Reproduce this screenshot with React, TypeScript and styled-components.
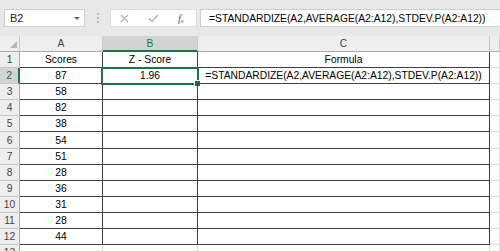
import React from "react";
import styled, { createGlobalStyle } from "styled-components";

const GlobalStyle = createGlobalStyle`
    body {
        margin      : 0;
        overflow    : hidden;
        background  : #ffffff;
        font-family : "Liberation Sans", Arial, sans-serif;
    }
`;

const GREEN = "#217346";
const FORMULA = "=STANDARDIZE(A2,AVERAGE(A2:A12),STDEV.P(A2:A12))";

const Window = styled.div`
    width    : 500px;
    height   : 251px;
    overflow : hidden;
`;

const Toolbar = styled.div`
    height      : 36px;
    background  : #e8e8e8;
    display     : flex;
    align-items : flex-start;
    padding     : 9px 0 0 4px;
    box-sizing  : border-box;
`;

const NameBox = styled.div`
    width           : 81px;
    height          : 18px;
    box-sizing      : border-box;
    background      : #ffffff;
    border          : 1px solid #cfcfcf;
    display         : flex;
    align-items     : center;
    justify-content : space-between;
    padding         : 0 4px 0 5px;
    font-size       : 11px;
    color           : #222;
`;

const Caret = styled.span`
    width        : 0;
    height       : 0;
    border-left  : 3px solid transparent;
    border-right : 3px solid transparent;
    border-top   : 3px solid #666;
`;

const Grip = styled.div`
    width          : 25px;
    height         : 18px;
    display        : flex;
    flex-direction : column;
    align-items    : center;
    justify-content: center;
    gap            : 2px;

    span {
        width         : 2px;
        height        : 2px;
        background    : #a8a8a8;
        border-radius : 1px;
    }
`;

const FxBox = styled.div`
    width       : 87px;
    height      : 18px;
    box-sizing  : border-box;
    background  : #ffffff;
    border      : 1px solid #dcdcdc;
    display     : flex;
    align-items : center;
    padding     : 0 0 0 9px;
    gap         : 19px;
    margin-right: 3px;
`;

const FxLabel = styled.span`
    font-family : "Liberation Serif", serif;
    font-style  : italic;
    font-size   : 11px;
    color       : #555;
    letter-spacing : -0.5px;

    sub {
        font-size      : 7px;
        vertical-align : -1px;
    }
`;

const FormulaInput = styled.div`
    flex        : 1;
    height      : 18px;
    box-sizing  : border-box;
    background  : #ffffff;
    border      : 1px solid #cfcfcf;
    border-right: none;
    display     : flex;
    align-items : center;
    padding-left: 8px;
    font-size   : 10.3px;
    color       : #000;
    white-space : nowrap;
`;

const Sheet = styled.div`
    display               : grid;
    grid-template-columns : 20px 83px 95px 292px 1fr;
    grid-template-rows    : 16px;
    grid-auto-rows        : 16.1px;
`;

const Corner = styled.div`
    background    : #eeeeee;
    border-right  : 1px solid #c8c8c8;
    border-bottom : 1px solid #ababab;
    box-sizing    : border-box;
    display       : flex;
    align-items   : flex-end;
    justify-content: flex-end;
    padding       : 0 2px 3px 0;
`;

const ColHead = styled.div<{ $active?: boolean }>`
    background      : ${p => (p.$active ? "#d3d3d3" : "#eeeeee")};
    color           : ${p => (p.$active ? GREEN : "#444")};
    border-right    : 1px solid #c8c8c8;
    border-bottom   : ${p => (p.$active ? `2px solid ${GREEN}` : "1px solid #ababab")};
    box-sizing      : border-box;
    display         : flex;
    align-items     : center;
    justify-content : center;
    font-size       : 10.3px;
`;

const RowHead = styled.div<{ $active?: boolean }>`
    background      : ${p => (p.$active ? "#d3d3d3" : "#eeeeee")};
    color           : ${p => (p.$active ? GREEN : "#444")};
    border-right    : ${p => (p.$active ? `2px solid ${GREEN}` : "1px solid #ababab")};
    border-bottom   : 1px solid #c8c8c8;
    box-sizing      : border-box;
    display         : flex;
    align-items     : center;
    justify-content : center;
    font-size       : 10.3px;
`;

const Cell = styled.div<{ $boxed?: boolean; $selected?: boolean }>`
    position        : relative;
    border-right    : 1px solid ${p => (p.$boxed ? "#404040" : "#dadada")};
    border-bottom   : 1px solid ${p => (p.$boxed ? "#404040" : "#dadada")};
    box-sizing      : border-box;
    display         : flex;
    align-items     : center;
    justify-content : center;
    font-size       : 10.3px;
    color           : #000;
    white-space     : nowrap;

    ${p =>
        p.$selected &&
        `
        &::before {
            content  : "";
            position : absolute;
            left     : -2px;
            top      : -1px;
            right    : -2px;
            bottom   : -2px;
            border   : 2px solid ${GREEN};
        }
        &::after {
            content    : "";
            position   : absolute;
            right      : -4px;
            bottom     : -4px;
            width      : 5px;
            height     : 5px;
            background : ${GREEN};
            border     : 1px solid #fff;
        }
    `}
`;

const rows: [string, string, string][] = [
    ["Scores", "Z - Score", "Formula"],
    ["87", "1.96", FORMULA],
    ["58", "", ""],
    ["82", "", ""],
    ["38", "", ""],
    ["54", "", ""],
    ["51", "", ""],
    ["28", "", ""],
    ["36", "", ""],
    ["31", "", ""],
    ["28", "", ""],
    ["44", "", ""],
    ["", "", ""],
];

const App = () => (
    <Window>
        <GlobalStyle />
        <Toolbar>
            <NameBox>
                <span>B2</span>
                <Caret />
            </NameBox>
            <Grip>
                <span />
                <span />
                <span />
            </Grip>
            <FxBox>
                <svg width="9" height="9" viewBox="0 0 9 9">
                    <path d="M1 1 L8 8 M8 1 L1 8" stroke="#b4b4b4" strokeWidth="1.2" />
                </svg>
                <svg width="11" height="9" viewBox="0 0 11 9">
                    <path d="M1 4.5 L4 7.5 L10 1" stroke="#b4b4b4" strokeWidth="1.4" fill="none" />
                </svg>
                <FxLabel>
                    f<sub>x</sub>
                </FxLabel>
            </FxBox>
            <FormulaInput>{FORMULA}</FormulaInput>
        </Toolbar>
        <Sheet>
            <Corner>
                <svg width="7" height="7" viewBox="0 0 7 7">
                    <path d="M7 0 L7 7 L0 7 Z" fill="#b7b7b7" />
                </svg>
            </Corner>
            <ColHead>A</ColHead>
            <ColHead $active>B</ColHead>
            <ColHead>C</ColHead>
            <ColHead />
            {rows.map((r, i) => {
                const n = i + 1;
                const boxed = n <= 12;
                return (
                    <React.Fragment key={n}>
                        <RowHead $active={n === 2}>{n}</RowHead>
                        <Cell $boxed={boxed}>{r[0]}</Cell>
                        <Cell $boxed={boxed} $selected={n === 2}>{r[1]}</Cell>
                        <Cell $boxed={boxed}>{r[2]}</Cell>
                        <Cell />
                    </React.Fragment>
                );
            })}
        </Sheet>
    </Window>
);

export default App;
